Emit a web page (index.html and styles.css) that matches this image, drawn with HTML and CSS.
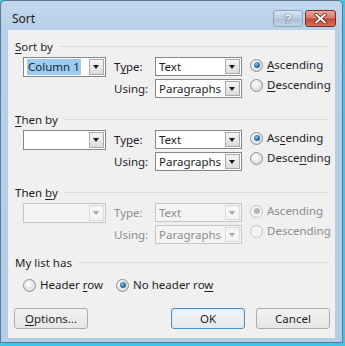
FILE: index.html
```html
<!DOCTYPE html>
<html>
<head>
<meta charset="utf-8">
<link rel="stylesheet" href="styles.css">
</head>
<body>
<div class="window">
  <div class="titlebar">
    <span class="title">Sort</span>
    <div class="tbtn help">?</div>
    <div class="tbtn close"><svg width="13" height="11" viewBox="0 0 13 11"><path d="M2 1.5 L11 9.5 M11 1.5 L2 9.5" stroke="#5a1a14" stroke-width="3.4" stroke-linecap="round"/><path d="M2 1.5 L11 9.5 M11 1.5 L2 9.5" stroke="#fff" stroke-width="2" stroke-linecap="round"/></svg></div>
  </div>
  <div class="client">
    <div class="group">
      <div class="legend"><span><u>S</u>ort by</span><i class="sep"></i></div>
      <div class="gbody">
        <div class="combo key"><span class="val"><span class="sel">Column 1</span></span><span class="arrow"></span></div>
        <div class="fields">
          <span class="lbl">T<u>y</u>pe:</span>
          <div class="combo"><span class="val">Text</span><span class="arrow"></span></div>
          <span class="lbl">Using:</span>
          <div class="combo"><span class="val">Paragraphs</span><span class="arrow"></span></div>
        </div>
        <div class="radios">
          <div class="radio on"><span class="dot"></span><span><u>A</u>scending</span></div>
          <div class="radio"><span class="dot"></span><span><u>D</u>escending</span></div>
        </div>
      </div>
    </div>
    <div class="group">
      <div class="legend"><span><u>T</u>hen by</span><i class="sep"></i></div>
      <div class="gbody">
        <div class="combo key"><span class="val"></span><span class="arrow"></span></div>
        <div class="fields">
          <span class="lbl">Ty<u>p</u>e:</span>
          <div class="combo"><span class="val">Text</span><span class="arrow"></span></div>
          <span class="lbl">Using:</span>
          <div class="combo"><span class="val">Paragraphs</span><span class="arrow"></span></div>
        </div>
        <div class="radios">
          <div class="radio on"><span class="dot"></span><span>As<u>c</u>ending</span></div>
          <div class="radio"><span class="dot"></span><span>Desce<u>n</u>ding</span></div>
        </div>
      </div>
    </div>
    <div class="group disabled">
      <div class="legend"><span>Then <u>b</u>y</span><i class="sep"></i></div>
      <div class="gbody">
        <div class="combo key"><span class="val"></span><span class="arrow"></span></div>
        <div class="fields">
          <span class="lbl">Type:</span>
          <div class="combo"><span class="val">Text</span><span class="arrow"></span></div>
          <span class="lbl">Using:</span>
          <div class="combo"><span class="val">Paragraphs</span><span class="arrow"></span></div>
        </div>
        <div class="radios">
          <div class="radio on"><span class="dot"></span><span>Ascending</span></div>
          <div class="radio"><span class="dot"></span><span>Descending</span></div>
        </div>
      </div>
    </div>
    <div class="group last">
      <div class="legend"><span>My list has</span><i class="sep"></i></div>
      <div class="hrow">
        <div class="radio"><span class="dot"></span><span>Header <u>r</u>ow</span></div>
        <div class="radio on"><span class="dot"></span><span>No header ro<u>w</u></span></div>
      </div>
    </div>
    <div class="buttons">
      <div class="btn"><u>O</u>ptions...</div>
      <div class="btn default">OK</div>
      <div class="btn">Cancel</div>
    </div>
  </div>
</div>
</body>
</html>
```
FILE: styles.css
```css
html, body {
  margin: 0;
  padding: 0;
}
body {
  width: 345px;
  height: 346px;
  background: #3ec6e6;
  font-family: "Noto Sans", "Open Sans", sans-serif;
  font-size: 11.5px;
  color: #1e1e1e;
  overflow: hidden;
}
u { text-decoration: underline; text-underline-offset: 2px; text-decoration-thickness: 1px; }
.window {
  width: 343px;
  height: 343px;
  box-sizing: border-box;
  border: 1px solid #5d7894;
  border-radius: 5px 5px 0 0;
  background: linear-gradient(#c3d8ee 0, #b7cfe8 30px, #b4cce6 100%);
}
.titlebar {
  height: 29px;
  display: flex;
  align-items: flex-start;
  box-sizing: border-box;
  padding: 0 6px 0 11px;
}
.title {
  font-size: 12px;
  color: #1b1b1b;
  line-height: 16px;
  margin-top: 10px;
  flex: 1;
}
.tbtn {
  margin-top: 9px;
  height: 17px;
  box-sizing: border-box;
  border-radius: 3px;
  display: flex;
  align-items: center;
  justify-content: center;
}
.help {
  width: 30px;
  margin-right: 2px;
  border: 1px solid #8ba3bd;
  background: linear-gradient(#dae6f3, #b7c9dc 50%, #a9bdd3 51%, #c2d3e6);
  color: #fff;
  font-family: "Liberation Sans", sans-serif;
  font-weight: bold;
  font-size: 13px;
  text-shadow: 0 0 1px #3e5a78, 0 0 1px #3e5a78, 0 0 1px #3e5a78;
}
.close {
  width: 31px;
  border: 1px solid #7e2b22;
  background: linear-gradient(#e9a99c, #d5786a 45%, #c3493a 55%, #d0725f);
}
.client {
  margin: 0 7px;
  height: 308px;
  background: #f0f0f0;
  box-sizing: border-box;
  padding-top: 9px;
}
.group { margin-bottom: 14px; }
.group.disabled { margin-bottom: 11px; }
.group.last { margin-bottom: 0; }
.legend {
  display: flex;
  align-items: center;
  height: 16px;
  line-height: 16px;
  padding-left: 7px;
  padding-right: 6px;
}
.sep {
  flex: 1;
  height: 1px;
  background: #dcdcdc;
  margin-left: 6px;
  margin-top: -2px;
}
.gbody {
  display: flex;
  align-items: flex-start;
  padding-left: 15px;
  margin-top: 2px;
}
.combo {
  display: flex;
  box-sizing: border-box;
  height: 19px;
  border: 1px solid #828790;
  background: #fff;
  padding: 1px;
}
.combo .val {
  flex: 1;
  line-height: 15px;
  padding-left: 2px;
  white-space: nowrap;
  overflow: hidden;
}
.combo.key { width: 83px; height: 20px; }
.combo.key .val { padding-left: 2px; line-height: 16px; }
.sel {
  background: #9ccbf2;
  display: inline-block;
  padding: 0 1px;
  height: 16px;
}
.arrow {
  width: 15px;
  box-sizing: border-box;
  border: 1px solid #a9a9a9;
  background: linear-gradient(#f4f4f4, #dcdcdc);
  position: relative;
}
.arrow::after {
  content: "";
  position: absolute;
  left: 3px;
  top: 5px;
  border-left: 3.5px solid transparent;
  border-right: 3.5px solid transparent;
  border-top: 4px solid #1a1a1a;
}
.fields {
  display: grid;
  grid-template-columns: 41px 87px;
  row-gap: 3px;
  margin-left: 8px;
}
.lbl {
  line-height: 19px;
}
.radios {
  margin-left: 8px;
  display: flex;
  flex-direction: column;
  gap: 4px;
}
.radio {
  display: flex;
  align-items: center;
  gap: 4px;
  height: 16px;
  line-height: 16px;
  white-space: nowrap;
}
.dot {
  width: 13px;
  height: 13px;
  box-sizing: border-box;
  border-radius: 50%;
  border: 1px solid #8e8f8f;
  background: radial-gradient(circle at 40% 35%, #fdfdfd, #d9d9d9 80%);
  position: relative;
  flex: none;
}
.radio.on .dot::after {
  content: "";
  position: absolute;
  left: 2.5px;
  top: 2.5px;
  width: 6px;
  height: 6px;
  border-radius: 50%;
  background: radial-gradient(circle at 40% 35%, #7fc3ea, #1f6a9e 60%, #0f3f66);
}
.disabled { color: #8d8d8d; }
.disabled .legend { color: #1e1e1e; }
.disabled .combo { border-color: #c6c6c6; background: #f4f4f4; }
.disabled .arrow { border-color: #dadada; background: #f4f4f4; }
.disabled .arrow::after { border-top-color: #a8a8a8; }
.disabled .dot { border-color: #c4c4c4; background: #f4f4f4; }
.disabled .radio.on .dot::after { background: #b5b5b5; }
.hrow {
  display: flex;
  padding-left: 15px;
  margin-top: 6px;
  gap: 13px;
}
.buttons {
  display: flex;
  padding: 0 5px 0 6px;
  margin-top: 15px;
}
.btn {
  width: 74px;
  height: 21px;
  box-sizing: border-box;
  border: 1px solid #acacac;
  border-radius: 3px;
  background: linear-gradient(#f2f2f2, #e6e6e6);
  text-align: center;
  line-height: 19px;
}
.btn.default {
  margin-left: auto;
  margin-right: 11px;
  border-color: #4a8fc7;
  box-shadow: inset 0 0 0 1px #d9ebf8;
  background: linear-gradient(#f2f5f8, #e4e9ee);
}
```
